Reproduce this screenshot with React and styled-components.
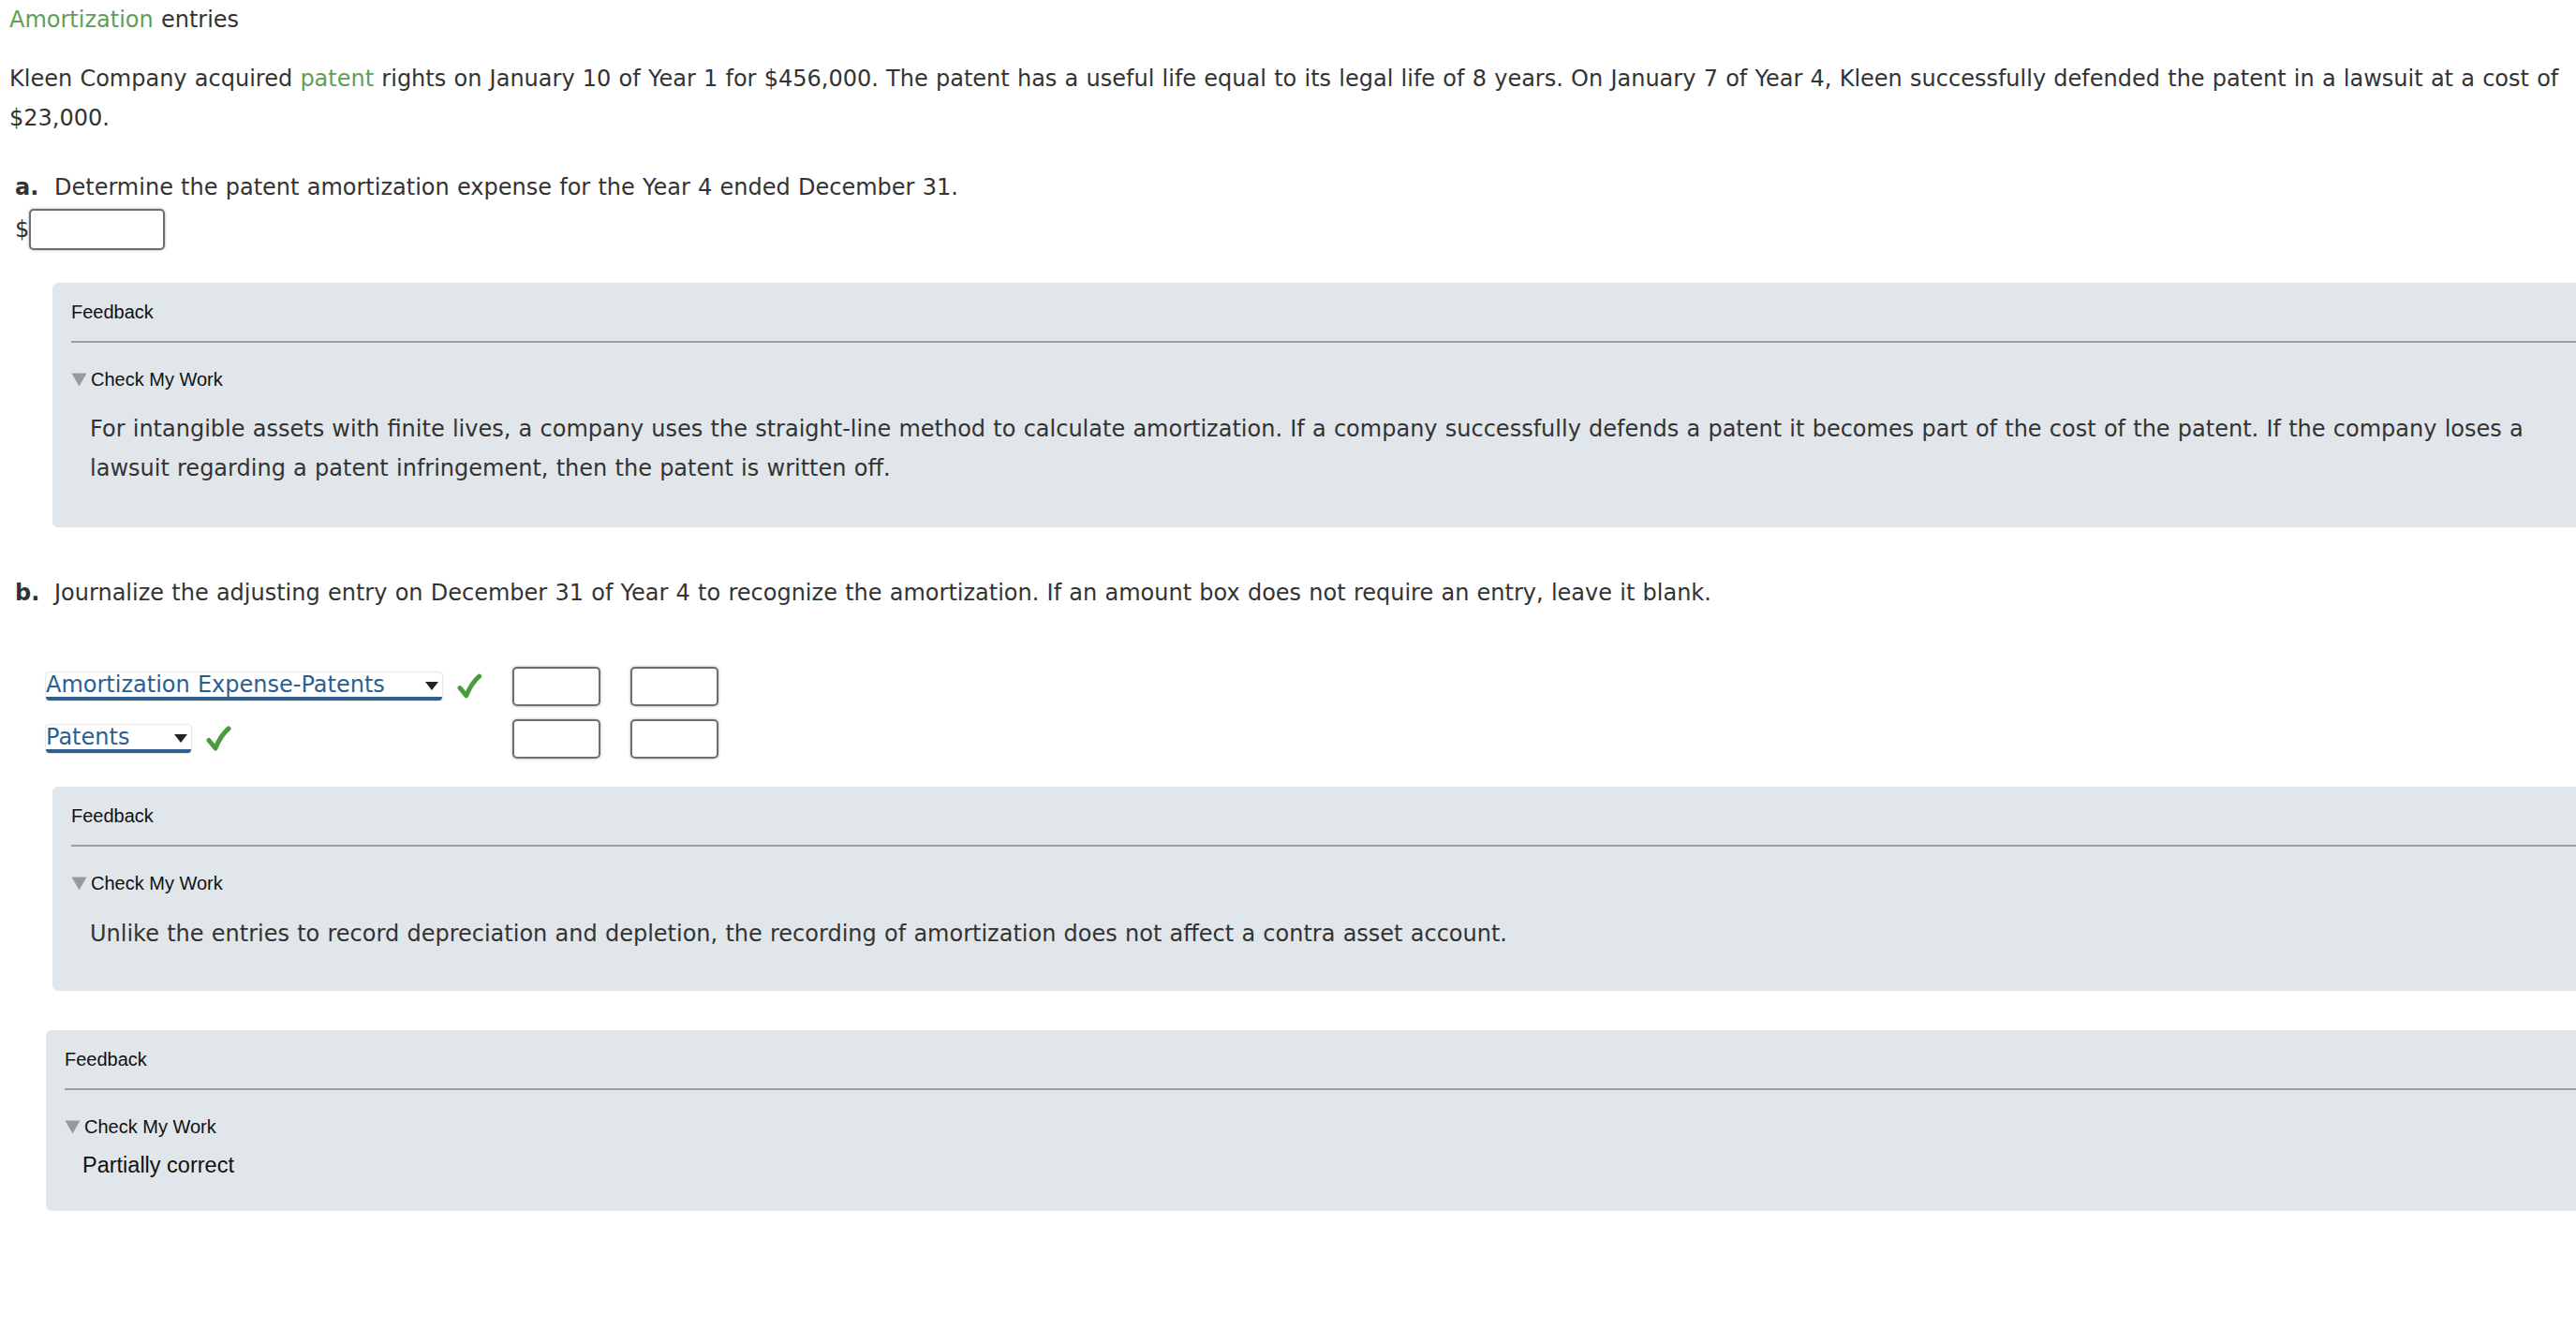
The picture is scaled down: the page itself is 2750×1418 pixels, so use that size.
import styled, { createGlobalStyle } from "styled-components";

const GlobalStyle = createGlobalStyle`
  html, body {
    margin: 0;
    padding: 0;
    background: #ffffff;
  }
`;

const Page = styled.div`
  padding: 0 0 40px 10px;
  font-family: "DejaVu Sans", Verdana, sans-serif;
  font-size: 24px;
  line-height: 42px;
  word-spacing: 0.6px;
  color: #333333;
  overflow: hidden;
`;

const Title = styled.div`
  margin: 0;
`;

const Term = styled.span`
  color: #5f9e5a;
`;

const Paragraph = styled.p`
  margin: 21px 0 0 0;
`;

const Step = styled.div`
  margin-top: ${p => p.$top}px;
  padding-left: 6px;
`;

const Marker = styled.b`
  display: inline-block;
  min-width: 42px;
  font-weight: bold;
`;

const AmountRow = styled.div`
  display: flex;
  align-items: center;
  padding-left: 6px;
  margin-top: 2px;
  line-height: 44px;
`;

const AmountBox = styled.div`
  box-sizing: border-box;
  width: ${p => p.$w}px;
  height: ${p => p.$h}px;
  background: #ffffff;
  border: 2px solid #6e6e6e;
  border-radius: 5px;
  box-shadow: 0 0 3px rgba(0, 0, 0, 0.35);
`;

const Panel = styled.section`
  margin-top: ${p => p.$top}px;
  margin-left: ${p => p.$indent}px;
  background: #e1e6ea;
  border-radius: 6px 0 0 6px;
  padding: 19px 0 ${p => p.$bottom}px 20px;
`;

const PanelHead = styled.div`
  font-family: "Liberation Sans", Arial, sans-serif;
  font-size: 20px;
  line-height: 24px;
  word-spacing: 0;
  color: #111111;
  padding-bottom: 19px;
  border-bottom: 2px solid #9a9ea2;
`;

const Toggle = styled.div`
  display: flex;
  align-items: center;
  gap: 4px;
  margin-top: 27px;
  font-family: "Liberation Sans", Arial, sans-serif;
  font-size: 20px;
  line-height: 24px;
  word-spacing: 0;
  color: #111111;
`;

const PanelText = styled.div`
  margin-top: ${p => p.$top}px;
  padding-left: 20px;
  padding-right: 4px;
`;

const Verdict = styled.div`
  margin-top: 14px;
  padding-left: 19px;
  font-family: "Liberation Sans", Arial, sans-serif;
  font-size: 23.5px;
  line-height: 30px;
  word-spacing: 0;
  color: #111111;
`;

const JournalGrid = styled.div`
  display: grid;
  grid-template-columns: 466px 94px 94px;
  column-gap: 32px;
  row-gap: 14px;
  align-items: center;
  margin-top: 58px;
  margin-left: 39px;
`;

const AccountCell = styled.div`
  display: flex;
  align-items: center;
  gap: 16px;
`;

const Select = styled.div`
  position: relative;
  box-sizing: border-box;
  width: ${p => p.$w}px;
  height: 30px;
  background: #ffffff;
  border-radius: 4px;
  border-bottom: 4px solid #2e5f8f;
  box-shadow: 0 0 2px rgba(0, 0, 0, 0.35);
  color: #2b5f93;
  font-size: 24px;
  line-height: 27px;
  white-space: nowrap;
`;

const Caret = styled.svg`
  position: absolute;
  right: 4px;
  top: 10px;
`;

const Arrow = () => (
  <svg width="17" height="15" viewBox="0 0 17 15">
    <polygon points="0.5,0.5 16.5,0.5 8.5,14.5" fill="#999999" />
  </svg>
);

const Check = () => (
  <svg width="27" height="29" viewBox="0 0 27 29">
    <path
      d="M3 15.5 L10 24 C13.5 15 17.5 8.5 24 3"
      fill="none"
      stroke="#4c9a3f"
      strokeWidth="5"
      strokeLinecap="round"
      strokeLinejoin="round"
    />
  </svg>
);

function Account({ width, label }) {
  return (
    <AccountCell>
      <Select $w={width}>
        {label}
        <Caret width="14" height="9" viewBox="0 0 14 9">
          <polygon points="0,0 14,0 7,9" fill="#222222" />
        </Caret>
      </Select>
      <Check />
    </AccountCell>
  );
}

function Feedback({ top, indent, bottom, children }) {
  return (
    <Panel $top={top} $indent={indent} $bottom={bottom}>
      <PanelHead>Feedback</PanelHead>
      <Toggle>
        <Arrow />
        Check My Work
      </Toggle>
      {children}
    </Panel>
  );
}

export default function App() {
  return (
    <Page>
      <GlobalStyle />
      <Title>
        <Term>Amortization</Term> entries
      </Title>
      <Paragraph>
        Kleen Company acquired <Term>patent</Term> rights on January 10 of Year 1 for $456,000. The patent has a useful
        life equal to its legal life of 8 years. On January 7 of Year 4, Kleen successfully defended the patent in a
        lawsuit at a cost of $23,000.
      </Paragraph>

      <Step $top={32}>
        <Marker>a.</Marker>Determine the patent amortization expense for the Year 4 ended December 31.
      </Step>
      <AmountRow>
        $<AmountBox $w={145} $h={44} />
      </AmountRow>

      <Feedback top={35} indent={46} bottom={42}>
        <PanelText $top={20}>
          For intangible assets with finite lives, a company uses the straight-line method to calculate amortization.
          If a company successfully defends a patent it becomes part of the cost of the patent. If the company loses a
          lawsuit regarding a patent infringement, then the patent is written off.
        </PanelText>
      </Feedback>

      <Step $top={49}>
        <Marker>b.</Marker>Journalize the adjusting entry on December 31 of Year 4 to recognize the amortization. If an
        amount box does not require an entry, leave it blank.
      </Step>

      <JournalGrid>
        <Account width={430} label="Amortization Expense-Patents" />
        <AmountBox $w={94} $h={42} />
        <AmountBox $w={94} $h={42} />
        <Account width={155} label="Patents" />
        <AmountBox $w={94} $h={42} />
        <AmountBox $w={94} $h={42} />
      </JournalGrid>

      <Feedback top={30} indent={46} bottom={40}>
        <PanelText $top={21}>
          Unlike the entries to record depreciation and depletion, the recording of amortization does not affect a
          contra asset account.
        </PanelText>
      </Feedback>

      <Feedback top={42} indent={39} bottom={34}>
        <Verdict>Partially correct</Verdict>
      </Feedback>
    </Page>
  );
}
